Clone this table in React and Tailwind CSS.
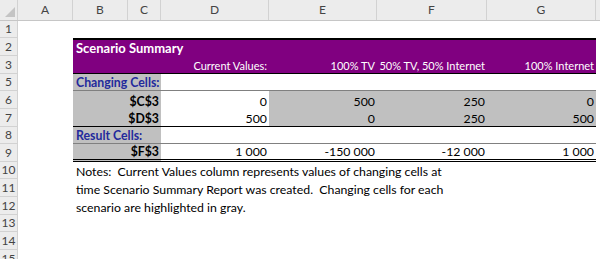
import React from "react";

const font = { fontFamily: "Lato, 'Open Sans', sans-serif" };

// widths: row header 18, A 55, B+C 88, D 108, E 108, F 110, G 109
function Cell({ w, className = "", children }) {
    return (
        <div className={`${w} h-full shrink-0 flex items-end justify-end px-[2px] leading-[15px] whitespace-nowrap ${className}`}>
            {children}
        </div>
    );
}

function Row({ num, h, children }) {
    return (
        <div className={`flex ${h}`}>
            <div className="w-[18px] shrink-0 h-full bg-[#ececec] border-r border-b border-[#d2d2d2] flex items-center justify-center text-[12px] text-[#444]">
                {num}
            </div>
            <div className="w-[55px] shrink-0 h-full" />
            {children}
        </div>
    );
}

function ColHead({ w, label }) {
    return (
        <div className={`${w} shrink-0 h-full border-r border-[#d2d2d2] flex items-center justify-center text-[12px] text-[#444]`}>
            {label}
        </div>
    );
}

function Note({ children }) {
    return <div className="h-full pl-[3px] flex items-end leading-[15px] whitespace-nowrap">{children}</div>;
}

export default function App() {
    const gray = "bg-[#c0c0c0]";
    const label = "font-bold text-[#232a9c]";
    const head = "bg-[#800080] border-b border-black text-white text-[11px]";

    return (
        <div className="w-[600px] h-[259px] overflow-hidden bg-white text-[12.3px] text-black" style={font}>
            {/* Column headers */}
            <div className="flex h-[21px] bg-[#ececec] border-b border-[#c6c6c6]">
                <div className="w-[18px] shrink-0 h-full border-r border-[#d2d2d2] relative">
                    <svg width="18" height="20" className="absolute left-0 top-0">
                        <polygon points="5,17 15,17 15,7" fill="#c4c4c4" />
                    </svg>
                </div>
                <ColHead w="w-[55px]" label="A" />
                <ColHead w="w-[55px]" label="B" />
                <ColHead w="w-[33px]" label="C" />
                <ColHead w="w-[108px]" label="D" />
                <ColHead w="w-[108px]" label="E" />
                <ColHead w="w-[110px]" label="F" />
                <ColHead w="w-[109px]" label="G" />
            </div>

            <Row num="1" h="h-[17px]" />
            {/* Title */}
            <Row num="2" h="h-[18px]">
                <div className="w-[523px] shrink-0 h-full bg-[#800080] border-t-2 border-black flex items-end leading-[15px] px-[3px] font-bold text-[13px] text-white">
                    Scenario Summary
                </div>
            </Row>
            <Row num="3" h="h-[18px]">
                <Cell w="w-[88px]" className={head} />
                <Cell w="w-[108px]" className={head}>Current Values:</Cell>
                <Cell w="w-[108px]" className={head}>100% TV</Cell>
                <Cell w="w-[110px]" className={head}>50% TV, 50% Internet</Cell>
                <Cell w="w-[109px]" className={head}>100% Internet</Cell>
            </Row>
            {/* Changing cells */}
            <Row num="5" h="h-[17px]">
                <Cell w="w-[88px]" className={`${gray} ${label} justify-start! px-[3px] border-b border-[#808080]`}>Changing Cells:</Cell>
                <Cell w="w-[435px]" className="border-b border-[#808080]" />
            </Row>
            <Row num="6" h="h-[18px]">
                <Cell w="w-[88px]" className={`${gray} font-bold`}>$C$3</Cell>
                <Cell w="w-[108px]">0</Cell>
                <Cell w="w-[108px]" className={gray}>500</Cell>
                <Cell w="w-[110px]" className={gray}>250</Cell>
                <Cell w="w-[109px]" className={gray}>0</Cell>
            </Row>
            <Row num="7" h="h-[18px]">
                <Cell w="w-[88px]" className={`${gray} font-bold border-b border-black`}>$D$3</Cell>
                <Cell w="w-[108px]" className="border-b border-black">500</Cell>
                <Cell w="w-[108px]" className={`${gray} border-b border-black`}>0</Cell>
                <Cell w="w-[110px]" className={`${gray} border-b border-black`}>250</Cell>
                <Cell w="w-[109px]" className={`${gray} border-b border-black`}>500</Cell>
            </Row>
            {/* Result cells */}
            <Row num="8" h="h-[17px]">
                <Cell w="w-[88px]" className={`${gray} ${label} justify-start! px-[3px] border-b border-[#808080]`}>Result Cells:</Cell>
                <Cell w="w-[435px]" className="border-b border-[#808080]" />
            </Row>
            <Row num="9" h="h-[18px]">
                <Cell w="w-[88px]" className={`${gray} font-bold border-b-[3px] border-double border-black`}>$F$3</Cell>
                <Cell w="w-[108px]" className="border-b-[3px] border-double border-black">1 000</Cell>
                <Cell w="w-[108px]" className="border-b-[3px] border-double border-black">-150 000</Cell>
                <Cell w="w-[110px]" className="border-b-[3px] border-double border-black">-12 000</Cell>
                <Cell w="w-[109px]" className="border-b-[3px] border-double border-black">1 000</Cell>
            </Row>
            {/* Notes */}
            <Row num="10" h="h-[17px]">
                <Note>Notes:&nbsp; Current Values column represents values of changing cells at</Note>
            </Row>
            <Row num="11" h="h-[18px]">
                <Note>time Scenario Summary Report was created.&nbsp; Changing cells for each</Note>
            </Row>
            <Row num="12" h="h-[18px]">
                <Note>scenario are highlighted in gray.</Note>
            </Row>
            <Row num="13" h="h-[17px]" />
            <Row num="14" h="h-[18px]" />
            <Row num="15" h="h-[18px]" />
        </div>
    );
}
